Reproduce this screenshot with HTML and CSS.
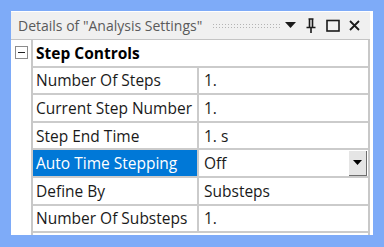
FILE: index.html
```html
<!DOCTYPE html>
<html lang="en">
<head>
    <meta charset="UTF-8">
    <title>Details of "Analysis Settings"</title>
    <link rel="stylesheet" href="styles.css">
</head>
<body>
    <div class="panel">
        <div class="header">
            <span class="title">Details of "Analysis Settings"</span>
            <span class="grip"></span>
            <span class="hdr-icons">
                <!-- dropdown arrow -->
                <svg width="11" height="7" viewBox="0 0 11 7"><path d="M0 0h11L5.5 6z" fill="#1a1a1a"/></svg>
                <!-- pin -->
                <svg width="12" height="15" viewBox="0 0 12 15">
                    <path d="M3.5 1h5M4.5 1v8M7.5 1v8M1.5 9.5h9M6 10v5" stroke="#1a1a1a" stroke-width="1.6" fill="none"/>
                </svg>
                <!-- maximise -->
                <svg width="14" height="13" viewBox="0 0 14 13">
                    <rect x="1" y="1.5" width="12" height="10.5" stroke="#1a1a1a" stroke-width="1.6" fill="none"/>
                </svg>
                <!-- close -->
                <svg width="11" height="11" viewBox="0 0 11 11">
                    <path d="M1 1l9 9M10 1l-9 9" stroke="#1a1a1a" stroke-width="1.8" fill="none"/>
                </svg>
            </span>
        </div>
        <div class="content">
            <div class="gutter">
                <span class="toggle"></span>
            </div>
            <div class="grid">
                <div class="row group">Step Controls</div>
                <div class="row">
                    <div class="name">Number Of Steps</div>
                    <div class="value">1.</div>
                </div>
                <div class="row">
                    <div class="name">Current Step Number</div>
                    <div class="value">1.</div>
                </div>
                <div class="row">
                    <div class="name">Step End Time</div>
                    <div class="value">1. s</div>
                </div>
                <div class="row">
                    <div class="name selected">Auto Time Stepping</div>
                    <div class="value combo">
                        <span>Off</span>
                        <span class="drop"><svg width="9" height="5" viewBox="0 0 9 5"><path d="M0 0h9L4.5 5z" fill="#000"/></svg></span>
                    </div>
                </div>
                <div class="row">
                    <div class="name">Define By</div>
                    <div class="value">Substeps</div>
                </div>
                <div class="row">
                    <div class="name">Number Of Substeps</div>
                    <div class="value">1.</div>
                </div>
            </div>
        </div>
    </div>
</body>
</html>
```

FILE: styles.css
```css
body {
    margin: 0;
    padding: 11px 11px 0 11px;
    background-color: #7eabf8;
    font-family: "Open Sans", "Noto Sans", sans-serif;
    font-size: 15.5px;
    color: #1a1a1a;
}

.panel {
    width: 362px;
    height: 224px;
    background: #ffffff;
    overflow: hidden;
    display: flex;
    flex-direction: column;
}

.header {
    height: 27px;
    margin-top: 1px;
    margin-right: 3px;
    background: #f0f0f0;
    border-bottom: 1px solid #c4c4c4;
    display: flex;
    align-items: center;
    padding-left: 7px;
    flex-shrink: 0;
}

.title {
    color: #5a5a5a;
    font-size: 14px;
    white-space: nowrap;
}

.grip {
    flex: 1;
    height: 6px;
    margin: 0 5px 0 10px;
    background-image: radial-gradient(circle, #b4b4b4 0.8px, transparent 1px);
    background-size: 3px 3px;
}

.hdr-icons {
    display: flex;
    align-items: center;
    gap: 9px;
    padding-right: 10px;
}

.content {
    flex: 1;
    display: flex;
}

.gutter {
    width: 20px;
    padding-top: 6px;
    display: flex;
    justify-content: center;
    align-items: flex-start;
}

.toggle {
    width: 11px;
    height: 11px;
    border: 1px solid #8c8c8c;
    position: relative;
    margin-left: 1px;
}

.toggle::after {
    content: "";
    position: absolute;
    left: 2px;
    right: 2px;
    top: 5px;
    height: 1px;
    background: #222;
}

.grid {
    flex: 1;
    border-left: 2px solid #c8c8c8;
    border-right: 2px solid #c8c8c8;
    margin-right: 3px;
}

.row {
    height: 25.6px;
    border-bottom: 2px solid #cbcbcb;
    display: flex;
}

.row.group {
    font-weight: bold;
    align-items: center;
    padding-left: 3px;
    color: #000;
}

.name {
    width: 161px;
    border-right: 2px solid #cbcbcb;
    padding-left: 3px;
    display: flex;
    align-items: center;
    white-space: nowrap;
    overflow: hidden;
}

.name.selected {
    background: #0078d7;
    color: #ffffff;
}

.value {
    flex: 1;
    padding-left: 5px;
    display: flex;
    align-items: center;
}

.value.combo {
    justify-content: space-between;
    padding-right: 1px;
}

.drop {
    width: 17px;
    height: 24px;
    background: #e5e5e5;
    border-right: 1px solid #6e6e6e;
    border-bottom: 1px solid #6e6e6e;
    display: flex;
    align-items: center;
    justify-content: center;
}
```
